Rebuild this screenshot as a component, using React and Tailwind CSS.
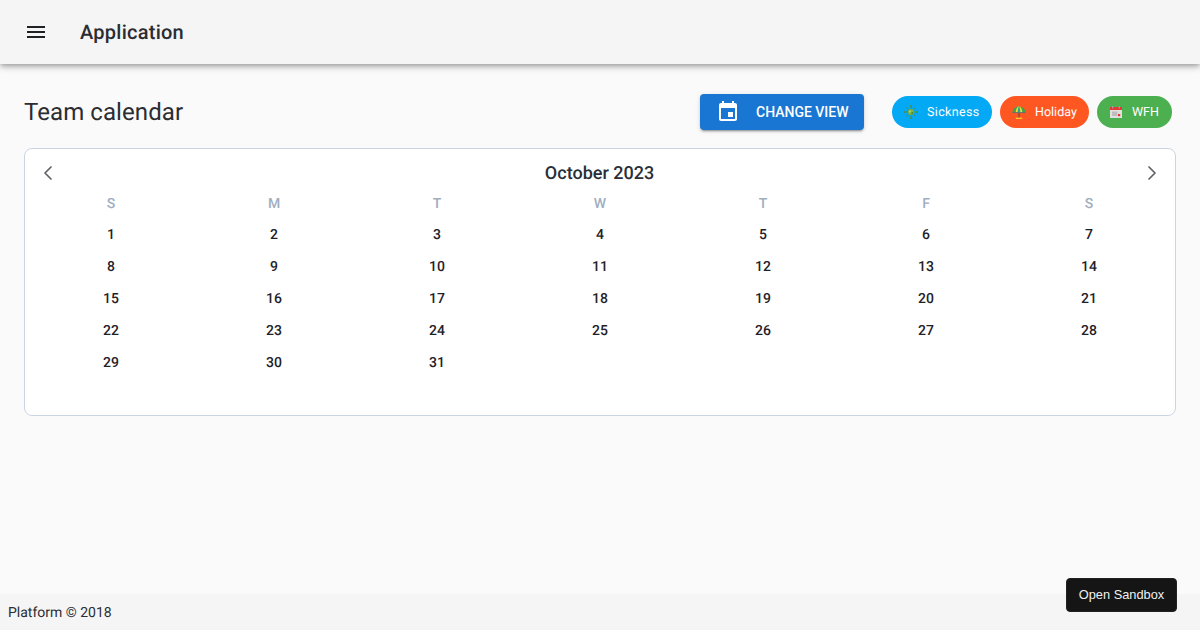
import React from 'react';
import { ChevronLeft, ChevronRight } from 'lucide-react';

const WEEK_DAYS = ['S', 'M', 'T', 'W', 'T', 'F', 'S'];
const DAYS = Array.from({ length: 31 }, (_, i) => i + 1);

function MenuIcon() {
    return (
        <svg width="24" height="24" viewBox="0 0 24 24" fill="#202124">
            <path d="M3 18h18v-2H3v2zm0-5h18v-2H3v2zm0-7v2h18V6H3z" />
        </svg>
    );
}

function CalendarIcon() {
    return (
        <svg width="24" height="24" viewBox="0 0 24 24" fill="#fff">
            <path d="M17 12h-5v5h5v-5zM16 1v2H8V1H6v2H5c-1.11 0-1.99.9-1.99 2L3 19c0 1.1.89 2 2 2h14c1.1 0 2-.9 2-2V5c0-1.1-.9-2-2-2h-1V1h-2zm3 18H5V8h14v11z" />
        </svg>
    );
}

function MicrobeEmoji() {
    return (
        <svg width="14" height="14" viewBox="0 0 14 14">
            <g stroke="#3f9160" strokeWidth="1">
                <path d="M7 0.5v13M0.5 7h13M2.4 2.4l9.2 9.2M11.6 2.4l-9.2 9.2" />
            </g>
            <g fill="#4e8f3a">
                <circle cx="7" cy="1" r="0.9" />
                <circle cx="7" cy="13" r="0.9" />
                <circle cx="1" cy="7" r="0.9" />
                <circle cx="13" cy="7" r="0.9" />
            </g>
            <circle cx="7" cy="7" r="3" fill="#7cb342" />
            <circle cx="6" cy="6.5" r="0.9" fill="#c5d96a" />
            <circle cx="8.2" cy="8" r="0.8" fill="#33691e" />
        </svg>
    );
}

function UmbrellaEmoji() {
    return (
        <svg width="15" height="15" viewBox="0 0 15 15">
            <rect x="7" y="2" width="1" height="11" fill="#5d4037" />
            <path d="M0.5 7.5C0.5 4 3.6 1 7.5 1S14.5 4 14.5 7.5z" fill="#43a047" />
            <path d="M4 7.5C4 4.2 5.6 1.2 7.5 1 9.4 1.2 11 4.2 11 7.5z" fill="#fdd835" />
            <path d="M6 7.5C6 4.2 6.8 1.4 7.5 1 8.2 1.4 9 4.2 9 7.5z" fill="#26a69a" />
            <rect x="0.5" y="7.2" width="14" height="0.9" fill="#546e7a" />
            <rect x="4" y="13" width="7" height="1.5" fill="#fbc02d" />
        </svg>
    );
}

function CalendarEmoji() {
    return (
        <svg width="14" height="14" viewBox="0 0 14 14">
            <rect x="1" y="2" width="12" height="11" fill="#e0e0e0" />
            <rect x="1" y="2" width="12" height="3" fill="#e53935" />
            <rect x="3" y="1" width="1.2" height="2.5" fill="#9e9e9e" />
            <rect x="9.8" y="1" width="1.2" height="2.5" fill="#9e9e9e" />
            <rect x="3" y="6.5" width="5.5" height="4.5" fill="#bdbdbd" />
            <rect x="9" y="9" width="2.2" height="2.2" fill="#e53935" />
        </svg>
    );
}

function Chip({ color, icon, label, className }) {
    return (
        <div className={`flex h-8 items-center rounded-full pl-3 pr-3 text-[12.5px] text-white ${color} ${className}`}>
            <span className="flex w-[14px] justify-center">{icon}</span>
            <span className="ml-[9px] pt-[2px]">{label}</span>
        </div>
    );
}

export default function App() {
    return (
        <div className="relative flex h-[630px] flex-col overflow-hidden bg-[#fafafa] font-['Roboto',sans-serif] text-[#202124] [text-rendering:geometricPrecision]">
            <header className="z-10 flex h-16 shrink-0 items-center bg-[#f5f5f5] px-6 shadow-[0_2px_4px_-1px_rgba(0,0,0,0.2),0_4px_5px_0_rgba(0,0,0,0.14),0_1px_10px_0_rgba(0,0,0,0.12)]">
                <MenuIcon />
                <h1 className="ml-8 text-xl font-medium tracking-[0.25px] text-[#2b2d33]">Application</h1>
            </header>

            <main className="flex-1 px-6 pt-[30px]">
                <div className="flex h-9 items-center">
                    <h2 className="flex-1 text-2xl font-normal tracking-[0.08px] text-[#2b2d33]">Team calendar</h2>
                    <button className="flex h-9 w-[164px] items-center rounded bg-[#1976d2] pl-4 text-sm font-medium text-white shadow-[0_3px_1px_-2px_rgba(0,0,0,0.2),0_2px_2px_0_rgba(0,0,0,0.14),0_1px_5px_0_rgba(0,0,0,0.12)]">
                        <CalendarIcon />
                        <span className="ml-4">CHANGE VIEW</span>
                    </button>
                    <div className="ml-7 mr-1 flex gap-2">
                        <Chip color="bg-[#03a9f4]" icon={<MicrobeEmoji />} label="Sickness" className="w-[100px] tracking-[0.35px]" />
                        <Chip color="bg-[#ff5722]" icon={<UmbrellaEmoji />} label="Holiday" className="w-[89px]" />
                        <Chip color="bg-[#4caf50]" icon={<CalendarEmoji />} label="WFH" className="w-[75px]" />
                    </div>
                </div>

                <section className="mt-[18px] h-[268px] rounded-lg border border-[#cbd5e1] bg-white px-[4.5px] pt-2">
                    <div className="flex h-8 items-center justify-between pl-[6px] pr-[7px]">
                        <ChevronLeft size={24} strokeWidth={1.75} className="text-[#5f6368]" />
                        <span className="pt-[2px] text-lg font-medium text-[#2a2e37]">October 2023</span>
                        <ChevronRight size={24} strokeWidth={1.75} className="text-[#5f6368]" />
                    </div>
                    <div className="grid grid-cols-7">
                        {WEEK_DAYS.map((d, i) => (
                            <div key={i} className="flex h-7 items-center justify-center pt-[2px] text-sm font-medium text-[#a0aec0]">
                                {d}
                            </div>
                        ))}
                    </div>
                    <div className="grid grid-cols-7 pt-[1px]">
                        {DAYS.map((d) => (
                            <div key={d} className="flex h-8 items-center justify-center pt-[2px] text-sm font-medium text-[#1f2128]">
                                {d}
                            </div>
                        ))}
                    </div>
                </section>
            </main>

            <footer className="flex h-9 shrink-0 items-center bg-[#f5f5f5] px-2 pt-[2px] text-sm text-[#2b2d33]">
                Platform © 2018
            </footer>

            <button className="absolute bottom-[18px] right-[23px] flex h-[34px] w-[111px] items-center justify-center rounded border border-[#222] bg-[#151515] font-['Liberation_Sans',sans-serif] text-[12.8px] text-[#f0f0f0]">
                Open Sandbox
            </button>
        </div>
    );
}
